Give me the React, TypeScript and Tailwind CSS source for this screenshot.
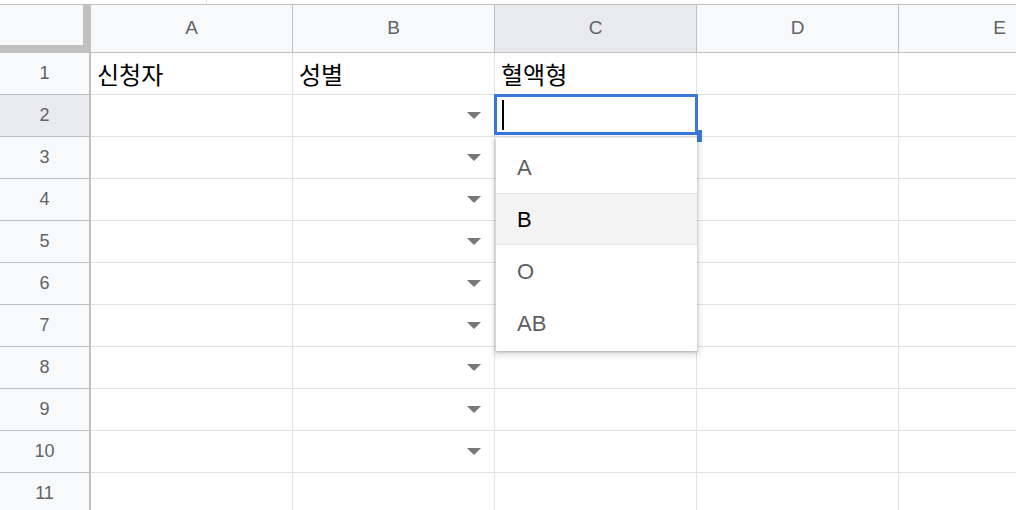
import React from 'react';

const cols = ['A', 'B', 'C', 'D', 'E'];
const rows = [1, 2, 3, 4, 5, 6, 7, 8, 9, 10, 11];
const row1: Record<string, string> = { A: '신청자', B: '성별', C: '혈액형' };
const options = ['A', 'B', 'O', 'AB'];

function Caret() {
  return (
    <svg width="14" height="7" viewBox="0 0 14 7" className="shrink-0">
      <polygon points="0,0 14,0 7,7" fill="#777777" />
    </svg>
  );
}

function Dropdown() {
  return (
    <div className="absolute left-[1px] top-[43px] z-20 w-[201px] bg-white pt-[3px] pb-[2px] shadow-[0_2px_6px_2px_rgba(60,64,67,0.18),0_1px_2px_rgba(60,64,67,0.3)]">
      {options.map((o) => (
        <div
          key={o}
          className={
            o === 'B'
              ? 'flex h-[52px] items-center border-y border-[#e6e6e6] bg-[#f3f3f3] pl-[21px] text-[22px] text-black'
              : 'flex h-[52px] items-center pl-[21px] text-[22px] text-[#5f5f5f]'
          }
        >
          {o}
        </div>
      ))}
    </div>
  );
}

export default function App() {
  return (
    <div
      className="relative h-[510px] w-[1016px] overflow-hidden bg-white"
      style={{ fontFamily: '"Liberation Sans", "Noto Sans CJK KR", sans-serif' }}
    >
      {/* strip above the sheet */}
      <div className="flex h-[4px]">
        <div className="w-[207px] border-r border-[#e3e3e3]" />
      </div>

      <div className="grid w-[1101px] grid-cols-[91px_repeat(5,202px)]">
        {/* header row */}
        <div className="h-[49px] border-t border-r-[8px] border-b-[8px] border-[#c0c0c0] bg-[#f8f9fa]" />
        {cols.map((c) => (
          <div
            key={c}
            className={`flex h-[49px] items-center justify-center border-t border-r border-b border-[#c0c0c0] text-[19px] text-[#5f6368] ${
              c === 'C' ? 'bg-[#e8eaed]' : 'bg-[#f8f9fa]'
            }`}
          >
            {c}
          </div>
        ))}

        {rows.map((r) => (
          <React.Fragment key={r}>
            <div
              className={`flex h-[42px] items-center justify-center border-r-2 border-b border-[#c0c0c0] text-[18px] text-[#5f6368] ${
                r === 2 ? 'bg-[#e8eaed]' : 'bg-[#f8f9fa]'
              }`}
            >
              {r}
            </div>
            {cols.map((c) => (
              <div
                key={c}
                className={`relative flex h-[42px] items-center border-r border-b border-[#e2e2e2] px-[6px] ${
                  r === 2 && c === 'C' ? 'z-10' : ''
                }`}
              >
                {r === 1 && row1[c] && (
                  <span
                    className="text-[24px] leading-none text-black"
                    style={{ fontFamily: '"Noto Sans CJK KR", sans-serif' }}
                  >
                    {row1[c]}
                  </span>
                )}
                {c === 'B' && r >= 2 && r <= 10 && (
                  <div className="ml-auto mr-[7px] flex">
                    <Caret />
                  </div>
                )}
                {r === 2 && c === 'C' && (
                  <>
                    <div className="absolute -left-px -top-px h-[41px] w-[204px] border-[3px] border-[#3a77dc] bg-white" />
                    <div className="absolute left-[7px] top-[5px] h-[30px] w-[2px] bg-black" />
                    <div className="absolute left-[202px] top-[35px] h-[12px] w-[5px] bg-[#3a77dc]" />
                    <Dropdown />
                  </>
                )}
              </div>
            ))}
          </React.Fragment>
        ))}
      </div>
    </div>
  );
}
